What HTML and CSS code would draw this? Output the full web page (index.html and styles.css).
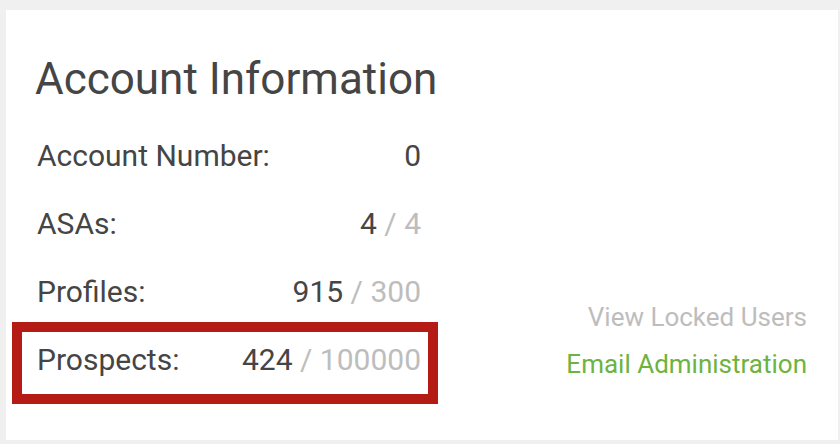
FILE: index.html
```html
<!DOCTYPE html>
<html>
  <head>
    <meta charset="UTF-8" />
    <meta name="viewport" content="width=device-width, initial-scale=1.0" />
    <title>Account Information</title>
    <link rel="stylesheet" href="styles.css">
  </head>
  <body>
    <div class="card">
      <div class="info">
        <h2>Account Information</h2>
        <div class="rows">
          <div class="row">
            <span>Account Number:</span>
            <span>0</span>
          </div>
          <div class="row">
            <span>ASAs:</span>
            <span>4 <span class="limit">/ 4</span></span>
          </div>
          <div class="row">
            <span>Profiles:</span>
            <span>915 <span class="limit">/ 300</span></span>
          </div>
          <div class="row marked">
            <span>Prospects:</span>
            <span>424 <span class="limit">/ 100000</span></span>
          </div>
        </div>
      </div>
      <div class="links">
        <a class="locked" href="#">View Locked Users</a>
        <a class="email" href="#">Email Administration</a>
      </div>
    </div>
  </body>
</html>
```

FILE: styles.css
```css
body {
  margin: 0;
  font-family: Roboto, "Liberation Sans", sans-serif;
  color: #454545;
  background-color: #f0f0f0;
}
.card {
  display: flex;
  justify-content: space-between;
  height: 430px;
  margin: 10px 2px 0 6px;
  background: #fff;
}
.info {
  width: 404px;
  padding-left: 16px;
}
h2 {
  margin: 0;
  padding: 43px 0 0 13px;
  height: 68px;
  font-size: 44px;
  font-weight: 400;
  line-height: 52px;
  white-space: nowrap;
}
.rows {
  width: 406px;
}
.row {
  display: flex;
  align-items: center;
  justify-content: space-between;
  box-sizing: border-box;
  height: 68px;
  padding: 0 7px 0 15px;
  font-size: 30px;
}
.row.marked {
  height: 82px;
  margin: -3px -10px 0 -10px;
  padding: 0 7px 7px 15px;
  border: 10px solid #b31b14;
}
.limit {
  color: #bdbdbd;
}
.links {
  display: flex;
  flex-direction: column;
  align-items: flex-end;
  justify-content: flex-end;
  padding: 0 31px 61px 0;
}
.links a {
  text-decoration: none;
  font-size: 26px;
}
.locked {
  color: #bdbdbd;
  margin-bottom: 17px;
}
.email {
  color: #6db33f;
}
```
